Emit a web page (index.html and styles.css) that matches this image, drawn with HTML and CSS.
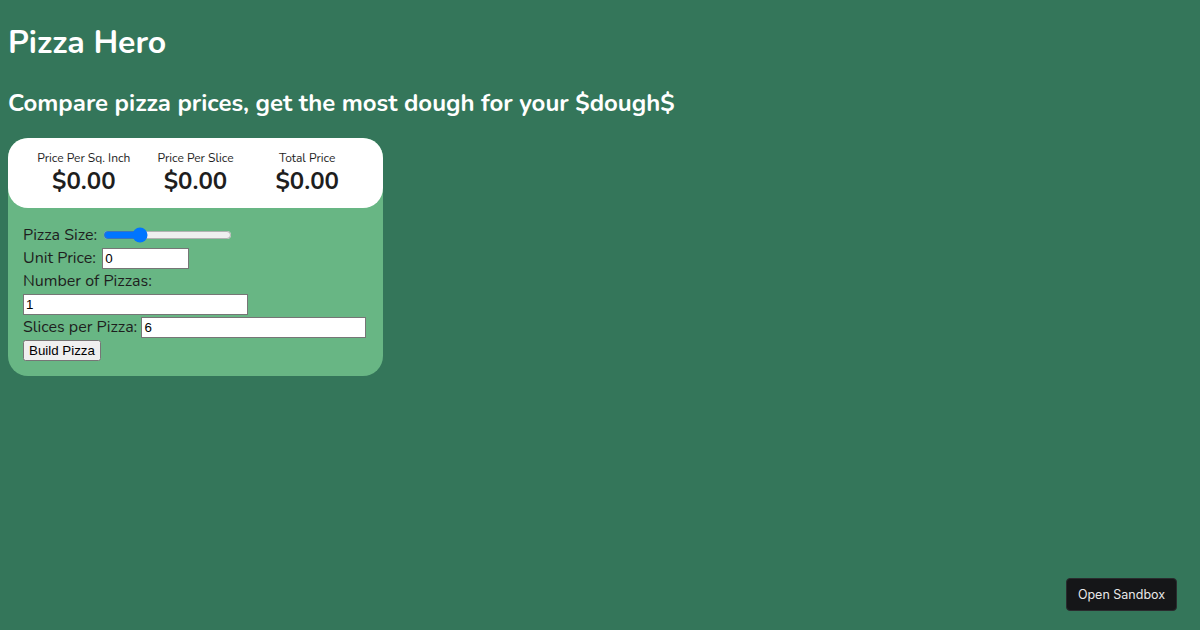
FILE: index.html
```html
<!DOCTYPE html>
<html lang="en">
<head>
<meta charset="utf-8">
<title>Pizza Hero</title>
<link rel="stylesheet" href="styles.css">
</head>
<body>
<h1>Pizza Hero</h1>
<h2>Compare pizza prices, get the most dough for your $dough$</h2>

<div class="card">
  <div class="stats">
    <div class="stat">
      <div class="stat-label">Price Per Sq. Inch</div>
      <div class="stat-value">$0.00</div>
    </div>
    <div class="stat">
      <div class="stat-label">Price Per Slice</div>
      <div class="stat-value">$0.00</div>
    </div>
    <div class="stat">
      <div class="stat-label">Total Price</div>
      <div class="stat-value">$0.00</div>
    </div>
  </div>
  <form class="builder">
    <label>Pizza Size: <input class="size" type="range" min="6" max="30" value="12"></label><br>
    <label>Unit Price: <input class="short" type="text" value="0"></label><br>
    <label>Number of Pizzas: <input class="long" type="text" value="1"></label><br>
    <label>Slices per Pizza: <input class="long" type="text" value="6"></label><br>
    <button type="button">Build Pizza</button>
  </form>
</div>

<button class="sandbox" type="button">Open Sandbox</button>
</body>
</html>
```

FILE: styles.css
```css
body {
  margin: 8px;
  background-color: #34765a;
  font-family: "Nunito", "Lato", "Noto Sans", sans-serif;
  color: #fff;
}

h1 {
  font-size: 32px;
  line-height: 1.364;
  margin: 13.44px 0 21.44px;
}

h2 {
  font-size: 24px;
  line-height: 1.364;
  margin: 19.92px 0 19px;
}

/* card */
.card {
  width: 375px;
  background-color: #68b684;
  border-radius: 20px;
  color: #1e1e1e;
}

.stats {
  display: grid;
  grid-template-columns: repeat(3, 1fr);
  height: 70px;
  padding: 0 20px;
  box-sizing: border-box;
  background-color: #fff;
  border-radius: 20px;
  align-content: center;
  text-align: center;
}

.stat-label {
  font-size: 12px;
  line-height: 15px;
}

.stat-value {
  font-size: 24px;
  font-weight: bold;
  line-height: 30px;
}

.builder {
  padding: 16px 15px 14px;
  font-size: 16px;
  line-height: 23px;
}

.builder input[type="text"] {
  font-family: "Liberation Sans", Arial, sans-serif;
  font-size: 13.33px;
  padding: 1px 2px;
  border: 1px solid #767676;
  border-radius: 0;
  box-sizing: border-box;
  height: 21px;
}

.builder .short { margin-left: 2px; width: 87px; }
.builder .long { width: 225px; }

.builder .size {
  width: 129px;
  margin: 0 2px 3px;
  vertical-align: middle;
  accent-color: #0075ff;
}

.builder button {
  font-family: "Liberation Sans", Arial, sans-serif;
  font-size: 13.33px;
  margin-top: 1px;
  padding: 1px 4px;
  height: 21px;
}

/* open sandbox */
.sandbox {
  position: fixed;
  right: 23px;
  bottom: 19px;
  width: 111px;
  height: 33px;
  background-color: #151618;
  color: #e8e8e8;
  border: 1px solid #2a2b2e;
  border-radius: 4px;
  font-family: "Inter", sans-serif;
  font-size: 12.5px;
}
```
